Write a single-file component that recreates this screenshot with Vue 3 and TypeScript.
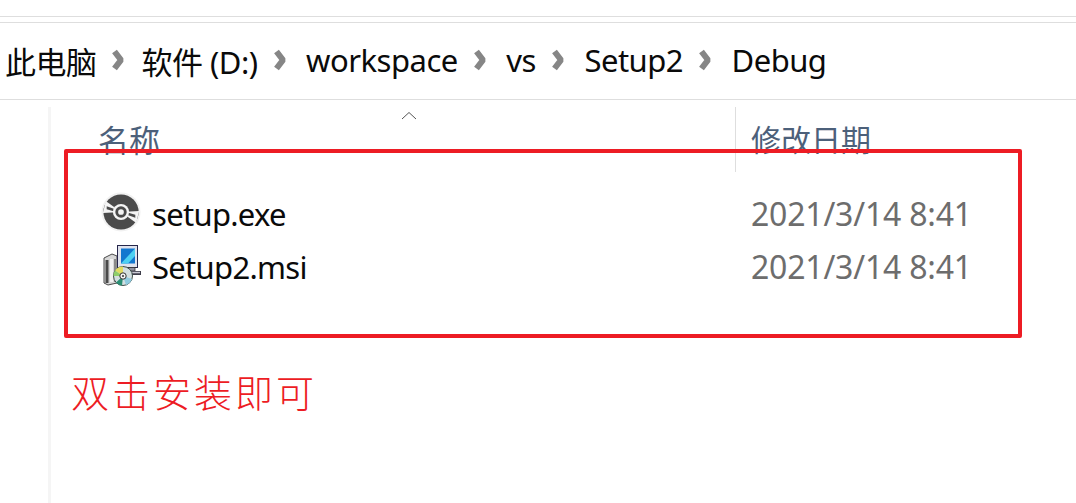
<script setup lang="ts">
const crumbs = ['此电脑', '软件 (D:)', 'workspace', 'vs', 'Setup2', 'Debug']
const files = [
  { name: 'setup.exe', date: '2021/3/14 8:41', kind: 'disc' },
  { name: 'Setup2.msi', date: '2021/3/14 8:41', kind: 'msi' }
]
</script>

<template>
  <div class="explorer">
    <div class="ribbon" />
    <nav class="crumbs">
      <template v-for="(c, i) in crumbs" :key="c">
        <svg v-if="i > 0" class="chevron" :class="{ 'chevron--first': i === 1 }" width="14" height="22" viewBox="0 0 14 22">
          <polyline points="3.500,2.500 10,11 3.500,19.500" fill="none" stroke="#868686" stroke-width="6" stroke-linejoin="bevel" />
        </svg>
        <span class="crumb">{{ c }}</span>
      </template>
    </nav>

    <div class="pane">
      <div class="list">
        <div class="head">
          <span class="head-name">名称</span>
          <svg class="caret" width="16" height="9" viewBox="0 0 16 9">
            <path d="M1 8 L8 1.500 L15 8" fill="none" stroke="#555" stroke-width="1" />
          </svg>
          <span class="head-date">修改日期</span>
        </div>

        <div class="rows">
          <div v-for="f in files" :key="f.name" class="row">
            <span class="icon" :class="`icon--${f.kind}`">
              <svg v-if="f.kind === 'disc'" width="40" height="40" viewBox="0 0 42 42">
                <circle cx="21" cy="21" r="20.500" fill="#f1f1f1" />
                <circle cx="21" cy="21" r="18.500" fill="#4a4a4a" />
                <path d="M21 21 L5 9.500 L2 22 Z" fill="#f4f4f4" />
                <path d="M21 21 L37 32.500 L40 20 Z" fill="#f4f4f4" />
                <path d="M6 15 L17 19 L16 21 L6 18 Z" fill="#4a4a4a" />
                <path d="M36 27 L25 23 L26 21 L36 24 Z" fill="#4a4a4a" />
                <circle cx="21" cy="21" r="8.500" fill="#f4f4f4" />
                <circle cx="21" cy="21" r="6" fill="#4a4a4a" />
                <circle cx="21" cy="21" r="3" fill="#f4f4f4" />
              </svg>
              <svg v-else width="42" height="42" viewBox="0 0 42 42">
                <path d="M4 14 L12 10 L17 12 L17 39 L8 41 L4 39 Z" fill="#d6d6d6" stroke="#4a4a4a" />
                <rect x="5.500" y="16" width="3" height="23" fill="#4a4a4a" />
                <rect x="10" y="15" width="3" height="23" fill="#f2f2f2" />
                <rect x="14" y="15" width="2" height="23" fill="#8a8a8a" />
                <rect x="17.500" y="1.500" width="20" height="22" fill="#dfe3ee" stroke="#26264a" />
                <rect x="21" y="4.500" width="14" height="15" fill="#1277cf" />
                <path d="M21 19.500 L35 4.500 L35 12 L28 19.500 Z" fill="#4dd0f2" />
                <rect x="21" y="23.500" width="14" height="3.500" fill="#8f8f9f" stroke="#333" stroke-width=".8" />
                <path d="M18 27 L41 27 L41 31 L18 31 Z" fill="#3d3d4a" />
                <rect x="30" y="27.800" width="10" height="1.500" fill="#c8c8d2" />
                <circle cx="23" cy="32" r="9.500" fill="#d3dfe0" stroke="#3f4f4a" />
                <path d="M23 32 L15 26.500 A9.500 9.500 0 0 1 23 22.500 Z" fill="#e2dc62" />
                <path d="M23 32 L13.500 32 A9.500 9.500 0 0 1 15 26.500 Z" fill="#8fce6a" />
                <path d="M23 32 L32 35 A9.500 9.500 0 0 1 26 41 Z" fill="#8fcbe0" />
                <path d="M23 32 L16 38.500 A9.500 9.500 0 0 0 22 41.500 Z" fill="#2a8f74" />
                <circle cx="23" cy="32" r="3.200" fill="#f2f2f2" stroke="#333" />
                <circle cx="23" cy="32" r="1" fill="#333" />
              </svg>
            </span>
            <span class="name">{{ f.name }}</span>
            <span class="date">{{ f.date }}</span>
          </div>
        </div>

        <p class="note">双击安装即可</p>
        <div class="mark" />
      </div>
    </div>
  </div>
</template>

<style>
html, body { margin: 0; background: #fff; overflow: hidden; }
</style>

<style scoped>
.explorer {
  width: 1076px;
  height: 503px;
  overflow: hidden;
  font-family: "Noto Sans", "Noto Sans CJK SC", sans-serif;
  background: #fff;
}

.ribbon {
  height: 5px;
  margin-top: 16px;
  border-top: 1px solid #dedede;
  border-bottom: 1px solid #dedede;
}

.crumbs {
  height: 77px;
  box-sizing: border-box;
  border-bottom: 1px solid #dedede;
  display: flex;
  align-items: center;
  padding: 0 0 2px 5px;
  font-size: 31px;
  letter-spacing: -0.5px;
  color: #0a0a0a;
}

.chevron { margin: 0 19.500px 0 15px; }
.chevron--first { margin: 0 17px 0 14px; }

.pane {
  margin: 7px 0 0 48px;
  height: 396px;
  border-left: 3px solid #f5f5f5;
}

.list { position: relative; height: 100%; }

.head {
  position: relative;
  height: 65px;
  display: flex;
  font-size: 30px;
  color: #4c607a;
}

.head-name { margin: 9px 0 0 47px; width: 637px; font-size: 31px; }
.head-date {
  padding: 9px 0 0 15px;
  border-left: 1px solid #dedede;
}

.caret { position: absolute; left: 350px; top: 4px; }

.rows { margin-top: 15px; }

.row {
  height: 53px;
  display: flex;
  align-items: center;
  font-size: 31px;
  letter-spacing: -0.700px;
  color: #0a0a0a;
}

.icon {
  width: 101px;
  box-sizing: border-box;
  display: flex;
}

.icon--disc { padding-left: 50px; margin-top: -4px; }
.icon--msi { padding-left: 49px; margin-top: -4px; }

.name { width: 599px; }
.date { color: #6d6d6d; font-size: 32px; letter-spacing: -0.200px; }

.note {
  margin: 74px 0 0 20px;
  font-size: 38px;
  font-weight: 300;
  letter-spacing: 3px;
  line-height: 50px;
  color: #ed1c24;
}

.mark {
  position: absolute;
  left: 13px;
  top: 42px;
  width: 958px;
  height: 189px;
  box-sizing: border-box;
  border: 4px solid #ed1c24;
  border-radius: 2px;
}
</style>
